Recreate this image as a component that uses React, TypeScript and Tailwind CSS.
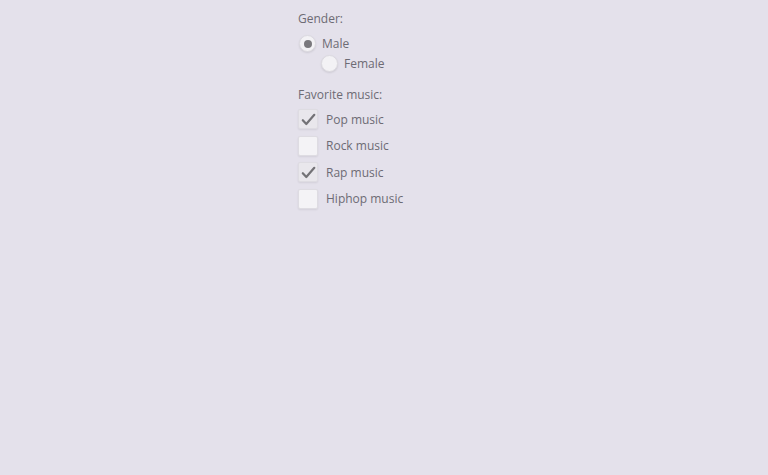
import { useState } from "react";

const font = { fontFamily: '"Open Sans", "Liberation Sans", sans-serif' };

function Radio({ checked, label, onClick }: { checked: boolean; label: string; onClick: () => void }) {
  return (
    <label className="flex h-[17px] items-center gap-[6px] cursor-pointer" onClick={onClick}>
      <span className="flex h-[17px] w-[17px] items-center justify-center rounded-full border border-[#dcdae0] bg-[#f3f2f5] shadow-[0_1px_2px_rgba(0,0,0,0.1)]">
        {checked && <span className="h-[8px] w-[8px] rounded-full bg-[#7a797d]" />}
      </span>
      <span className="text-[12px] leading-[17px] text-[#6d6b74]">{label}</span>
    </label>
  );
}

function Check({ checked, label, onClick }: { checked: boolean; label: string; onClick: () => void }) {
  return (
    <label className="flex h-[20px] items-center gap-[8px] cursor-pointer" onClick={onClick}>
      <span
        className={`flex h-[20px] w-[20px] items-center justify-center rounded-[2px] border border-[#dedce2] shadow-[0_1px_2px_rgba(0,0,0,0.08)] ${
          checked ? "bg-[#e9e7ec]" : "bg-[#f4f3f6]"
        }`}
      >
        {checked && (
          <svg width="15" height="13" viewBox="0 0 15 13" fill="none">
            <path d="M1.8 7.2 L5.3 11 L13.3 1.8" stroke="#737276" strokeWidth="2.2" strokeLinecap="round" strokeLinejoin="round" />
          </svg>
        )}
      </span>
      <span className="text-[12px] leading-[17px] text-[#6d6b74]">{label}</span>
    </label>
  );
}

export default function App() {
  const [gender, setGender] = useState("male");
  const [music, setMusic] = useState<Record<string, boolean>>({
    pop: true,
    rock: false,
    rap: true,
    hiphop: false,
  });

  const toggle = (k: string) => setMusic((m) => ({ ...m, [k]: !m[k] }));

  return (
    <div className="min-h-screen bg-[#e4e1eb]" style={font}>
      <div className="ml-[298px] pt-[10px]">
        <p className="text-[12px] leading-[17px] text-[#6d6b74]">Gender:</p>
        <div className="mt-[8px] flex flex-col gap-[3px]">
          <div className="ml-[1px]">
            <Radio checked={gender === "male"} label="Male" onClick={() => setGender("male")} />
          </div>
          <div className="ml-[23px]">
            <Radio checked={gender === "female"} label="Female" onClick={() => setGender("female")} />
          </div>
        </div>
        <p className="mt-[14px] text-[12px] leading-[17px] text-[#6d6b74]">Favorite music:</p>
        <div className="mt-[6px] flex flex-col gap-[6.5px]">
          <Check checked={music.pop} label="Pop music" onClick={() => toggle("pop")} />
          <Check checked={music.rock} label="Rock music" onClick={() => toggle("rock")} />
          <Check checked={music.rap} label="Rap music" onClick={() => toggle("rap")} />
          <Check checked={music.hiphop} label="Hiphop music" onClick={() => toggle("hiphop")} />
        </div>
      </div>
    </div>
  );
}
